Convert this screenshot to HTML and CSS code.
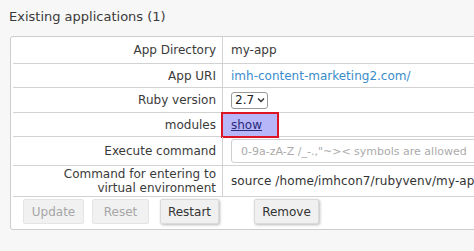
FILE: index.html
```html
<!DOCTYPE html>
<html>
<head>
<meta charset="utf-8">
<link rel="stylesheet" href="styles.css">
</head>
<body>
<div class="title">Existing applications (1)</div>
<div class="box">
  <div class="row r1">
    <div class="label">App Directory</div>
    <div class="value">my-app</div>
  </div>
  <div class="row r2">
    <div class="label">App URI</div>
    <div class="value"><a class="uri" href="#">imh-content-marketing2.com/</a></div>
  </div>
  <div class="row r3">
    <div class="label">Ruby version</div>
    <div class="value"><span class="select">2.7<svg class="chev" width="8" height="6" viewBox="0 0 8 6"><path d="M1 1.5 L4 4.5 L7 1.5" fill="none" stroke="#333" stroke-width="1.4"/></svg></span></div>
  </div>
  <div class="row r4">
    <div class="label">modules</div>
    <div class="value"><a class="show" href="#">show</a></div>
  </div>
  <div class="row r5">
    <div class="label">Execute command</div>
    <div class="value"><input class="cmd" type="text" placeholder="0-9a-zA-Z /_-.,&quot;~&gt;&lt; symbols are allowed"></div>
  </div>
  <div class="row r6">
    <div class="label two">Command for entering to<br>virtual environment</div>
    <div class="value src">source /home/imhcon7/rubyvenv/my-app/2.7/bin/activate</div>
  </div>
  <div class="btnrow">
    <button class="btn dis b-update">Update</button>
    <button class="btn dis b-reset">Reset</button>
    <button class="btn act b-restart">Restart</button>
    <button class="btn act b-remove">Remove</button>
  </div>
</div>
</body>
</html>
```
FILE: styles.css
```css
html, body {
  margin: 0;
  padding: 0;
}
body {
  background: #f7f7f7;
  font-family: "DejaVu Sans", Verdana, sans-serif;
  color: #3a3a3a;
  width: 474px;
  height: 251px;
  overflow: hidden;
}
.title {
  font-size: 13px;
  line-height: 15px;
  margin: 9px 0 0 9px;
  color: #3a3a3a;
}
.box {
  margin: 12px 0 0 10px;
  width: 540px;
  border: 1px solid #cdcdcd;
  border-radius: 3px;
  background: #ffffff;
  padding-left: 2px;
  font-size: 12px;
}
.row {
  display: flex;
  border-bottom: 1px solid #d2d2d2;
}
.r1 { height: 26px; }
.r2 { height: 23px; }
.r3 { height: 24px; }
.r4 { height: 23px; }
.r5 { height: 28px; }
.r6 { height: 30px; }
.label {
  width: 203px;
  padding-right: 6px;
  border-right: 1px solid #d2d2d2;
  text-align: right;
  display: flex;
  align-items: center;
  justify-content: flex-end;
  flex-shrink: 0;
}
.label.two {
  line-height: 14px;
}
.value {
  padding-left: 8px;
  display: flex;
  align-items: center;
  white-space: nowrap;
  flex: 1;
}
.uri {
  color: #3a8ccb;
  text-decoration: none;
}
.select {
  display: inline-flex;
  align-items: center;
  box-sizing: border-box;
  height: 17px;
  width: 37px;
  border: 1px solid #9a9a9a;
  border-radius: 3px;
  padding: 0 0 0 3px;
  color: #222;
  gap: 3px;
}
.r4 .value {
  align-items: flex-start;
}
.show {
  display: inline-block;
  box-sizing: border-box;
  width: 58px;
  height: 26px;
  margin: -1px 0 0 -10px;
  padding: 3px 0 0 8px;
  border: 2px solid #dc1424;
  background: #b6b6f8;
  color: #2a2a7a;
  text-decoration: underline;
  line-height: 16px;
}
.cmd {
  box-sizing: border-box;
  width: 260px;
  height: 24px;
  border: 1px solid #cfcfcf;
  border-radius: 3px;
  padding: 0 0 0 9px;
  font-family: "DejaVu Sans", Verdana, sans-serif;
  font-size: 11px;
  color: #333;
  background: #fff;
  outline: none;
}
.cmd::placeholder {
  color: #ababab;
}
.src {
  color: #333;
  overflow: hidden;
  letter-spacing: 0.1px;
}
.btnrow {
  height: 32px;
  display: flex;
  align-items: flex-start;
  padding: 2px 0 0 10px;
  box-sizing: border-box;
}
.btn {
  box-sizing: border-box;
  height: 25px;
  padding: 0;
  font-family: "DejaVu Sans", Verdana, sans-serif;
  font-size: 12px;
  border-radius: 2px;
  text-align: center;
}
.dis {
  background: #f1f1f1;
  border: 1px solid #e4e4e4;
  color: #a6a6a6;
}
.act {
  background: #f0f0f0;
  border: 1px solid #dadada;
  color: #333;
  box-shadow: 1px 1px 3px rgba(0, 0, 0, 0.28);
}
.b-update { width: 61px; }
.b-reset { width: 57px; margin-left: 8px; }
.b-restart { width: 59px; margin-left: 11px; }
.b-remove { width: 65px; margin-left: 35px; }
```
